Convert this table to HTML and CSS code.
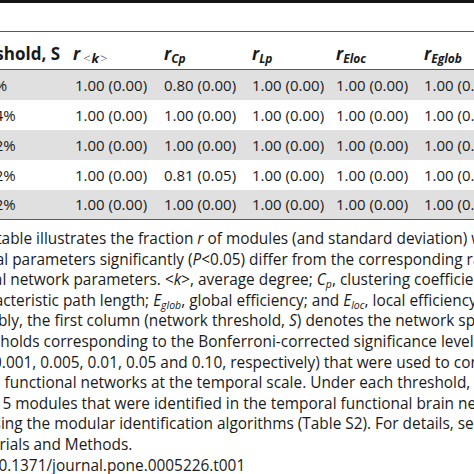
FILE: index.html
```html
<!DOCTYPE html>
<html>
<head>
<meta charset="utf-8">
<link rel="stylesheet" href="styles.css">
</head>
<body>
<div class="page">
  <div class="rule-top"></div>
  <div class="gap"></div>
  <table class="data">
    <colgroup>
      <col class="c0"><col class="c1"><col class="c2"><col class="c3"><col class="c4"><col class="c5">
    </colgroup>
    <thead>
      <tr>
        <th class="first">Network threshold, S</th>
        <th><i>r</i><sub class="kk"><span class="ang">&lt;</span><i>k</i><span class="ang">&gt;</span></sub></th>
        <th><i>r</i><sub><i>Cp</i></sub></th>
        <th><i>r</i><sub><i>Lp</i></sub></th>
        <th><i>r</i><sub><i>Eloc</i></sub></th>
        <th><i>r</i><sub><i>Eglob</i></sub></th>
      </tr>
    </thead>
    <tbody>
      <tr class="shade"><td class="lbl">9.78%</td><td class="v1">1.00 (0.00)</td><td>0.80 (0.00)</td><td>1.00 (0.00)</td><td>1.00 (0.00)</td><td>1.00 (0.00)</td></tr>
      <tr><td class="lbl">10.54%</td><td class="v1">1.00 (0.00)</td><td>1.00 (0.00)</td><td>1.00 (0.00)</td><td>1.00 (0.00)</td><td>1.00 (0.00)</td></tr>
      <tr class="shade"><td class="lbl">11.72%</td><td class="v1">1.00 (0.00)</td><td>1.00 (0.00)</td><td>1.00 (0.00)</td><td>1.00 (0.00)</td><td>1.00 (0.00)</td></tr>
      <tr><td class="lbl">13.12%</td><td class="v1">1.00 (0.00)</td><td>0.81 (0.05)</td><td>1.00 (0.00)</td><td>1.00 (0.00)</td><td>1.00 (0.00)</td></tr>
      <tr class="shade"><td class="lbl">15.22%</td><td class="v1">1.00 (0.00)</td><td>1.00 (0.00)</td><td>1.00 (0.00)</td><td>1.00 (0.00)</td><td>1.00 (0.00)</td></tr>
    </tbody>
  </table>
  <p class="caption">
    <span class="line">This table illustrates the fraction <i>r</i> of modules (and standard deviation) whose topo-</span>
    <span class="line">logical parameters significantly (<i>P</i>&lt;0.05) differ from the corresponding random</span>
    <span class="line">actual network parameters. &lt;<i>k</i>&gt;, average degree; <i>C<sub>p</sub></i>, clustering coefficient; <i>L<sub>p</sub></i>,</span>
    <span class="line">characteristic path length; <i>E<sub>glob</sub></i>, global efficiency; and <i>E<sub>loc</sub></i>, local efficiency.</span>
    <span class="line">Notably, the first column (network threshold, <i>S</i>) denotes the network sparsity</span>
    <span class="line">thresholds corresponding to the Bonferroni-corrected significance levels</span>
    <span class="line">(<i>P</i> = 0.001, 0.005, 0.01, 0.05 and 0.10, respectively) that were used to construct</span>
    <span class="line">brain functional networks at the temporal scale. Under each threshold, there</span>
    <span class="line">were 5 modules that were identified in the temporal functional brain networks</span>
    <span class="line">by using the modular identification algorithms (Table S2). For details, see</span>
    <span class="line">Materials and Methods.</span>
    <span class="line">doi:10.1371/journal.pone.0005226.t001</span>
  </p>
</div>
</body>
</html>
```
FILE: styles.css
```css
html, body {
  margin: 0;
  padding: 0;
  background: #ffffff;
}

.page {
  width: 474px;
  height: 474px;
  overflow: hidden;
  font-family: "Open Sans", "DejaVu Sans", sans-serif;
  color: #1a1a1a;
  font-size: 15px;
}

.rule-top {
  height: 3px;
  background: #141414;
}

.gap {
  height: 28px;
}

.data {
  margin-left: -120px;
  border-collapse: collapse;
  table-layout: fixed;
  width: 644px;
  border-top: 1px solid #5a5a5a;
  border-bottom: 1px solid #5a5a5a;
}

.data col.c0 { width: 193px; }
.data col.c1 { width: 91px; }
.data col.c2 { width: 88px; }
.data col.c3 { width: 84px; }
.data col.c4 { width: 88px; }
.data col.c5 { width: 100px; }

.data th,
.data td {
  padding: 0;
  text-align: left;
  white-space: nowrap;
  vertical-align: middle;
}

.data thead tr {
  height: 38px;
  border-bottom: 1px solid #5a5a5a;
}

.data th {
  font-size: 17px;
  font-weight: 700;
  padding-top: 5px;
}

.data th i {
  font-weight: 700;
}

.data th sub {
  font-size: 12px;
  line-height: 0;
  vertical-align: -3px;
}

.data th sub.kk {
  font-size: 13px;
  margin-left: 2px;
}

.data th .ang {
  font-weight: 300;
  font-style: normal;
  color: #444444;
  padding: 0 1px;
}

.data tbody tr {
  height: 30px;
}

.data tbody tr.shade {
  background: #e0e0e0;
}

.data td.lbl {
  padding-left: 85px;
}

.data td.v1 {
  padding-left: 2px;
}

.caption {
  margin: 9px 0 0 -37px;
  font-size: 15.4px;
  line-height: 20.6px;
  white-space: nowrap;
}

.caption .line {
  display: block;
}

.caption sub {
  font-size: 10.5px;
  line-height: 0;
  vertical-align: -3px;
}
```
